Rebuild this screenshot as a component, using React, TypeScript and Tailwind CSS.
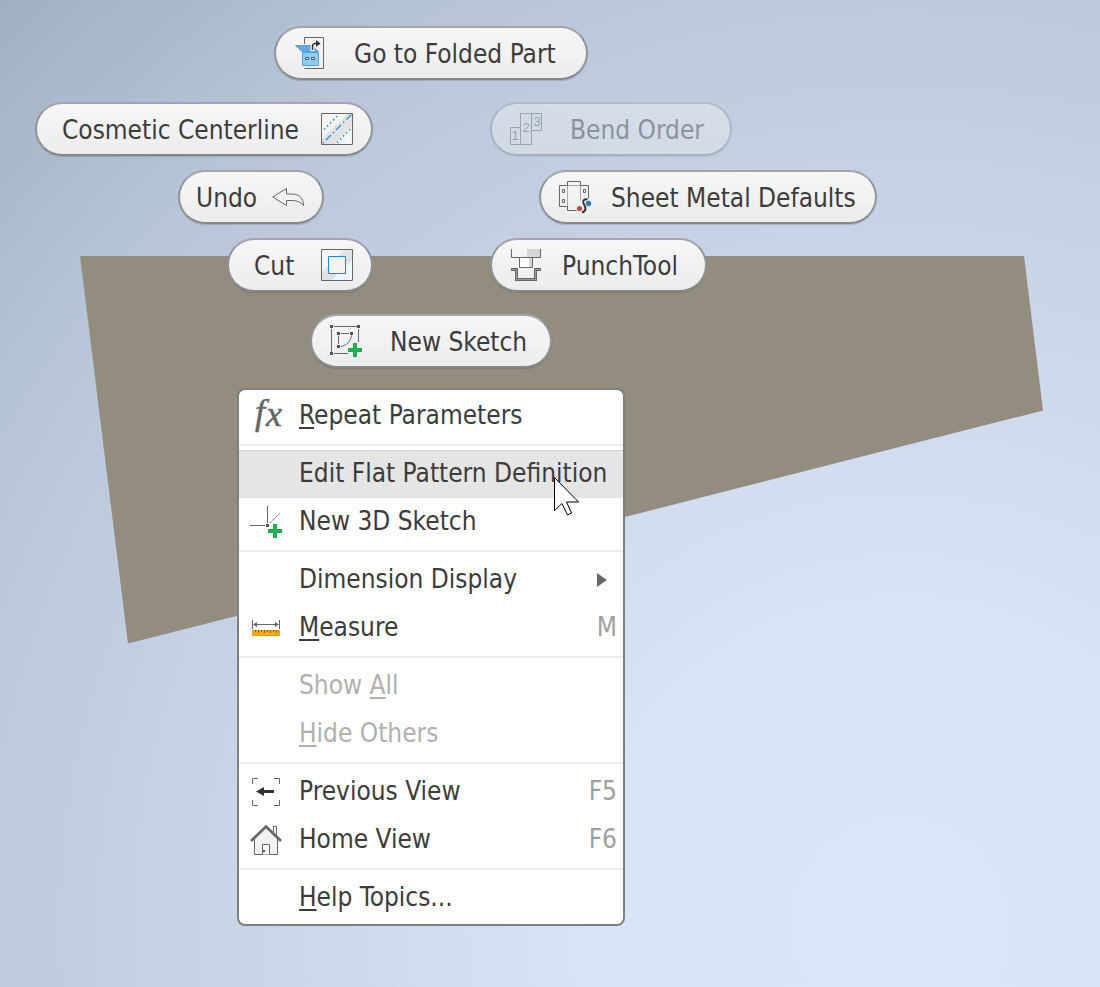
import type { ReactNode } from "react";
import { clsx } from "clsx";

function Icon({ children }: { children?: ReactNode }) {
  return (
    <svg
      width="32"
      height="32"
      viewBox="0 0 32 32"
      fill="none"
      stroke="#666"
      className="shrink-0 overflow-visible"
      aria-hidden="true"
    >
      {children}
    </svg>
  );
}

function GreenPlus() {
  return (
    <path
      d="M23.500 18.500h3v5h5v3h-5v5h-3v-5h-5v-3h5z"
      fill="#22b455"
      stroke="#1aa04a"
    />
  );
}

function FoldedPartIcon() {
  return (
    <Icon>
      <path d="M10.500 7V.500h19v31h-19" />
      <path d="M8.500 15.500h16v13h-16z" fill="#8ccaf8" stroke="#5fa3d9" />
      <path d="M1.500 8.500h17l6 6.500h-16z" fill="#62a9e3" stroke="#5a9fd8" />
      <path d="M18.500 14V9.500q0-3 3-3H23" stroke="#fff" strokeWidth="4" />
      <path d="M18.500 13V9.500q0-3 3-3H23" stroke="#333" strokeWidth="1.600" />
      <path d="M22 3l4.500 3.500L22 10z" fill="#333" stroke="none" />
      <path d="M11.500 20.500h3v2h-3zM17.500 20.500h3v2h-3z" fill="#fff" stroke="#555" />
    </Icon>
  );
}

function CenterlineIcon() {
  return (
    <Icon>
      <path d="M.500.500h31v31H.500z" fill="#f5f5f5" />
      <path d="M1 26L26 1h5v12L13 31H1z" fill="#e2e2e2" stroke="none" />
      <path d="M1 31L31 1" stroke="#1389ea" strokeWidth="1.300" strokeDasharray="7 3 1.500 3" strokeDashoffset="9" />
      <path d="M3 16.500L17 2.500M16 29.500L30 15.500" stroke="#1389ea" strokeWidth="1.500" strokeDasharray="1.500 2.800" />
    </Icon>
  );
}

function BendOrderIcon() {
  return (
    <Icon>
      <path d="M.500 14.500h10v17H.500zM10.500.500h11v31h-11zM21.500.500h10v17h-10z" />
      <g
        fill="#666"
        stroke="none"
        fontSize="13"
        textAnchor="middle"
        fontFamily="'Liberation Sans', sans-serif"
      >
        <text x="5" y="27">1</text>
        <text x="16" y="19">2</text>
        <text x="27" y="13">3</text>
      </g>
    </Icon>
  );
}

function UndoIcon() {
  return (
    <Icon>
      <path d="M.700 16L14.500 7.500V13H20c7 0 11.500 4 11.500 11.500-3-3.500-6.500-5-11.500-5h-5.500v5z" />
    </Icon>
  );
}

function CutIcon() {
  return (
    <Icon>
      <path d="M.500.500h31v31H.500z" fill="#f6f6f6" />
      <path d="M1 23L23 1h8v10L11 31H1z" fill="#e2e2e2" stroke="none" />
      <path d="M7.500 7.500h17v17h-17z" fill="#f2f2f2" stroke="#1389ea" />
    </Icon>
  );
}

function SheetMetalIcon() {
  return (
    <Icon>
      <path d="M8.500 4.500v21M21.500 4.500v15M8.500 4.500h13" stroke="#aaa" />
      <path d="M8.500 4.500h-8v21h8M8.500 4.500v-4h13v4h8v13M8.500 25.500v4h9" />
      <path d="M3.500 8.500h2v3h-2zM3.500 18.500h2v3h-2zM24.500 8.500h2v3h-2z" />
      <path
        d="M28.500 18.500c-4-1-5.500 2-3.500 5s2.500 6.500-2 8"
        stroke="#333"
        strokeWidth="2"
      />
      <circle cx="20.500" cy="27.500" r="2.600" fill="#c04848" stroke="none" />
      <circle cx="29.500" cy="22.500" r="2.700" fill="#2a7dbd" stroke="none" />
    </Icon>
  );
}

function PunchIcon() {
  return (
    <Icon>
      <path d="M17 0h13v8H17z" fill="#d6d6d6" stroke="none" />
      <path d="M1.500 0v8.500h29V0" />
      <path d="M9.500 8.500h13v10h-13z" fill="#fff" />
      <path d="M19 9h3v9h-3z" fill="#d6d6d6" stroke="none" />
      <path d="M1 20.500h5.500v10h19v-10H31" strokeWidth="3" />
      <path d="M1.500 20.500h5v10h19v-10h5" stroke="#999" />
    </Icon>
  );
}

function SketchIcon() {
  return (
    <Icon>
      <path d="M4 1.500h23M1.500 4v23M28.500 4v13M4 28.500h14M11 8.500h8M8.500 11v8M21.500 10.500c-1 6-5 10-10.500 11" />
      <path
        d="M0 0h3v3H0zM27 0h3v3h-3zM0 27h3v3H0zM7 7h3v3H7zM20 7h3v3h-3zM7 20h3v3H7z"
        fill="#555"
        stroke="none"
      />
      <GreenPlus />
    </Icon>
  );
}

function ParametersIcon() {
  return (
    <Icon>
      <g
        fill="#666"
        stroke="#666"
        strokeWidth="0.500"
        fontStyle="italic"
        fontFamily="'Liberation Serif', serif"
      >
        <text x="5" y="24" fontSize="36">
          f
        </text>
        <text x="16" y="26" fontSize="36">
          x
        </text>
      </g>
    </Icon>
  );
}

function Sketch3DIcon() {
  return (
    <Icon>
      <path d="M17.500 0v17M0 19.500h15" />
      <path d="M20 17l9.500-9.500" strokeDasharray="1.500 .6" />
      <path d="M16 18h3v3h-3z" fill="#555" stroke="none" />
      <GreenPlus />
    </Icon>
  );
}

function MeasureIcon() {
  return (
    <Icon>
      <path d="M2.500 8v9M29.500 8v9M5 12.500h22" />
      <path d="M3 12.500l4-2.500v5zM29 12.500l-4-2.500v5z" fill="#666" stroke="none" />
      <path d="M2.500 18.500h27v5h-27z" fill="#ffa800" stroke="#ee9a0a" />
      <path d="M5.500 18v2M8.500 18v3M11.500 18v2M14.500 18v3M17.500 18v2M20.500 18v3M23.500 18v2M26.500 18v3" stroke="#80631f" />
    </Icon>
  );
}

function PreviousViewIcon() {
  return (
    <Icon>
      <path d="M2.500 8V2.500H8M24 2.500h5.500V8M29.500 24v5.500H24M8 29.500H2.500V24" />
      <path d="M6 15.500l8-4.500v3h10v3H14v3z" fill="#333" stroke="none" />
    </Icon>
  );
}

function HomeIcon() {
  return (
    <Icon>
      <path d="M23.500 10V2.500h3V13" fill="#f2f2f2" />
      <path d="M4.500 30.500V14L16 3l11.500 11v16.500z" fill="#f2f2f2" />
      <path d="M12.500 30.500v-10h7v10" fill="#fff" />
      <path d="M13 26h2v2h-2z" fill="#555" stroke="none" />
      <path d="M1 17L16 2.500 31 17" strokeWidth="2.600" />
    </Icon>
  );
}

function Pill({
  icon,
  label,
  className,
  iconLast = false,
  disabled = false,
}: {
  icon: ReactNode;
  label: string;
  className: string;
  iconLast?: boolean;
  disabled?: boolean;
}) {
  return (
    <button
      type="button"
      disabled={disabled}
      className={clsx(
        "flex h-[54px] shrink-0 items-center rounded-full border-2 border-t-[#a3a5ab] border-r-[#929498] border-b-[#85878a] border-l-[#929498] bg-linear-to-b from-[#f7f7f7] to-[#ececec] bg-origin-border whitespace-nowrap shadow-[0_1px_1px_rgba(0,0,0,0.15)]",
        iconLast && "justify-between",
        disabled && "opacity-40",
        className,
      )}
    >
      {!iconLast && icon}
      <span className="pt-[2px]">{label}</span>
      {iconLast && icon}
    </button>
  );
}

function MarkingMenu() {
  return (
    <nav aria-label="Marking menu" className="flex w-full flex-col items-center">
      <Pill icon={<FoldedPartIcon />} label="Go to Folded Part" className="w-[314px] gap-7 pl-[18px]" />
      <div className="mt-[22px] grid w-full grid-cols-[373px_1fr] gap-x-[117px] gap-y-[14px]">
        <div className="flex justify-end">
          <Pill icon={<CenterlineIcon />} label="Cosmetic Centerline" iconLast className="w-[338px] pr-[18px] pl-[25px]" />
        </div>
        <div className="flex">
          <Pill icon={<BendOrderIcon />} label="Bend Order" disabled className="w-[242px] gap-7 pl-[18px]" />
        </div>
        <div className="flex justify-end pr-[49px]">
          <Pill icon={<UndoIcon />} label="Undo" iconLast className="w-[146px] pr-[18px] pl-4" />
        </div>
        <div className="flex pl-[49px]">
          <Pill icon={<SheetMetalIcon />} label="Sheet Metal Defaults" className="w-[338px] gap-5 pl-[18px]" />
        </div>
        <div className="flex justify-end">
          <Pill icon={<CutIcon />} label="Cut" iconLast className="w-[146px] pr-[18px] pl-[25px]" />
        </div>
        <div className="flex">
          <Pill icon={<PunchIcon />} label="PunchTool" className="w-[217px] gap-5 pl-[18px]" />
        </div>
      </div>
      <Pill icon={<SketchIcon />} label="New Sketch" className="mt-[22px] w-[242px] gap-7 pl-[18px]" />
    </nav>
  );
}

function Key({ children }: { children: string }) {
  return (
    <span className="underline decoration-2 underline-offset-[3px] [text-decoration-skip-ink:none]">
      {children}
    </span>
  );
}

function MenuItem({
  icon,
  children,
  shortcut,
  submenu = false,
  active = false,
  disabled = false,
}: {
  icon?: ReactNode;
  children: ReactNode;
  shortcut?: string;
  submenu?: boolean;
  active?: boolean;
  disabled?: boolean;
}) {
  return (
    <button
      type="button"
      role="menuitem"
      aria-haspopup={submenu ? "menu" : undefined}
      disabled={disabled}
      className={clsx(
        "flex h-12 w-full items-center pr-[6px] pl-[11px] whitespace-nowrap",
        active && "bg-[#e5e5e5] shadow-[inset_0_1px_0_#d2d2d2]",
        disabled && "text-[#b0b0b0]",
      )}
    >
      <span className="mr-[17px] size-8 shrink-0">{icon}</span>
      <span className="mb-[3px] grow text-left leading-7">{children}</span>
      {shortcut && <span className="mb-[3px] leading-7 text-[#a0a0a0]">{shortcut}</span>}
      {submenu && (
        <svg width="10" height="14" viewBox="0 0 10 14" className="mr-[10px]" aria-hidden="true">
          <path d="M0 0l10 7-10 7z" fill="#666" />
        </svg>
      )}
    </button>
  );
}

function Separator() {
  return <div role="separator" className="my-1 h-[2px] bg-[#eeeeee]" />;
}

function ContextMenu() {
  return (
    <div
      role="menu"
      className="mt-5 w-[388px] rounded-lg border-2 border-[#7f7f7f] bg-white py-[2px]"
    >
      <MenuItem icon={<ParametersIcon />}>
        <Key>R</Key>epeat Parameters
      </MenuItem>
      <Separator />
      <MenuItem active>Edit Flat Pattern Definition</MenuItem>
      <MenuItem icon={<Sketch3DIcon />}>New 3D Sketch</MenuItem>
      <Separator />
      <MenuItem submenu>Dimension Display</MenuItem>
      <MenuItem icon={<MeasureIcon />} shortcut="M">
        <Key>M</Key>easure
      </MenuItem>
      <Separator />
      <MenuItem disabled>
        Show <Key>A</Key>ll
      </MenuItem>
      <MenuItem disabled>
        <Key>H</Key>ide Others
      </MenuItem>
      <Separator />
      <MenuItem icon={<PreviousViewIcon />} shortcut="F5">
        Previous View
      </MenuItem>
      <MenuItem icon={<HomeIcon />} shortcut="F6">
        Home View
      </MenuItem>
      <Separator />
      <MenuItem>
        <Key>H</Key>elp Topics...
      </MenuItem>
    </div>
  );
}

export default function App() {
  return (
    <main className="relative min-h-screen overflow-hidden bg-[radial-gradient(circle_at_82%_94%,#dae5f7_0%,#d8e3f5_25%,#cad6e8_50%,#bac7db_76%,#a1b0c5_100%)] font-['DejaVu_Sans_Condensed','DejaVu_Sans',sans-serif] text-[26px] text-[#3c3c3c]">
      <svg width="1100" height="987" className="absolute top-0 left-0" aria-hidden="true">
        <path d="M80 256H1024L1043 410.500L128 643.500z" fill="#938d80" />
      </svg>
      <div className="relative flex w-[862px] flex-col items-center pt-[26px] pb-[60px]">
        <MarkingMenu />
        <ContextMenu />
      </div>
      <svg
        width="26"
        height="40"
        viewBox="0 0 26 40"
        className="absolute top-[477px] left-[554px]"
        aria-hidden="true"
      >
        <path
          d="M.500.500V33.500L8 26.500L13.500 38L17.500 36L12.500 25H24.500z"
          fill="#fff"
          stroke="#000"
        />
      </svg>
    </main>
  );
}
